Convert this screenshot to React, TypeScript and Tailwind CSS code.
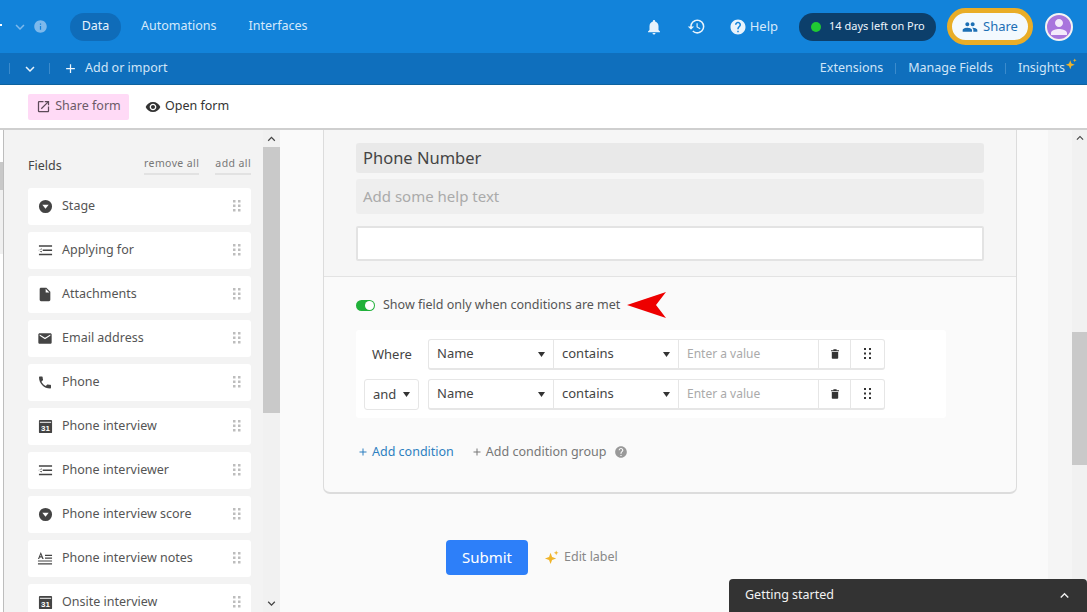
import React from "react";
import { MdNotifications, MdHistory, MdHelp, MdPeople, MdOpenInNew, MdVisibility, MdPhone, MdEmail, MdInsertDriveFile, MdInfo, MdAdd, MdKeyboardArrowDown, MdKeyboardArrowUp, MdArrowDropDown, MdPerson } from "react-icons/md";

const Sparkle = ({ className }: { className?: string }) => (
  <svg viewBox="0 0 16 16" className={className} fill="#f0b429">
    <path d="M7 3 L8.6 7.4 L13 9 L8.6 10.6 L7 15 L5.4 10.6 L1 9 L5.4 7.4 Z" />
    <path d="M13 0.5 L13.7 2.3 L15.5 3 L13.7 3.7 L13 5.5 L12.3 3.7 L10.5 3 L12.3 2.3 Z" />
  </svg>
);

const Grip = ({ color = "#bdbdbd", size = 2 }: { color?: string; size?: number }) => (
  <svg width="8" height="12" viewBox="0 0 8 12" fill={color}>
    {[0, 4.5, 9].map((y) => [0, 5].map((x) => <rect key={`${x}-${y}`} x={x} y={y} width={size + 0.5} height={size + 0.5} />))}
  </svg>
);

const Select = () => (
  <svg viewBox="0 0 16 16" className="w-[15px] h-[15px]" fill="#444">
    <path fillRule="evenodd" d="M8 1a7 7 0 1 1 0 14A7 7 0 0 1 8 1zM4.6 6.2h6.8L8 10.4z" />
  </svg>
);
const Lines = () => (
  <svg viewBox="0 0 16 16" className="w-[15px] h-[15px]" fill="#444">
    <path d="M1 2.5h14v1.6H1zM1 11.5h14v1.6H1zM5 7h10v1.6H5zM1 7h3V5.6L0.5 7.8 4 10V8.6H1z" />
  </svg>
);
const Calendar = () => (
  <svg viewBox="0 0 16 16" className="w-[15px] h-[15px]">
    <rect x="1" y="1" width="14" height="14" rx="1" fill="#444" />
    <rect x="2" y="3" width="12" height="1" fill="#fff" />
    <text x="8" y="13" textAnchor="middle" fontSize="8.5" fontWeight="700" fill="#fff" fontFamily="Liberation Sans, sans-serif">31</text>
  </svg>
);
const LongText = () => (
  <svg viewBox="0 0 16 16" className="w-[16px] h-[15px]" fill="#444">
    <path d="M3.5 1 L6.6 8.4 H5.2 L4.6 6.8 H2.4 L1.8 8.4 H0.5 Z M2.8 5.7 H4.2 L3.5 3.7 Z" />
    <path d="M8 4h7.5v1.3H8zM8 7h7.5v1.3H8zM0.5 10h15v1.3H.5zM.5 13h15v1.3H.5z" />
  </svg>
);
const Trash = () => (
  <svg viewBox="0 0 10 12" className="w-[8px] h-[10px]" fill="#333">
    <path d="M3 0h4v1.2h3v1.3H0V1.2h3zM1 3.6h8v7.4a1 1 0 0 1-1 1H2a1 1 0 0 1-1-1z" />
  </svg>
);

const fields: [string, React.ReactNode][] = [
  ["Stage", <Select />],
  ["Applying for", <Lines />],
  ["Attachments", <MdInsertDriveFile className="text-[#444] text-[17px]" />],
  ["Email address", <MdEmail className="text-[#444] text-[17px]" />],
  ["Phone", <MdPhone className="text-[#444] text-[17px]" />],
  ["Phone interview", <Calendar />],
  ["Phone interviewer", <Lines />],
  ["Phone interview score", <Select />],
  ["Phone interview notes", <LongText />],
  ["Onsite interview", <Calendar />],
];

const Dropdown = ({ label, w }: { label: string; w: string }) => (
  <div className={`${w} h-full flex items-center justify-between pl-[8px] pr-[8px] border-r border-[#e6e6e6]`}>
    <span>{label}</span>
    <svg width="7" height="5" viewBox="0 0 7 5" fill="#333"><path d="M0 0h7L3.5 5z" /></svg>
  </div>
);

const Row = ({ first }: { first?: boolean }) => (
  <div className="flex items-center h-[31px] text-[13px] text-[#444]">
    {first ? (
      <div className="w-[55px] mr-[9px] pl-[8px]">Where</div>
    ) : (
      <div className="w-[55px] mr-[9px] h-full border border-[#e6e6e6] rounded-[3px] flex items-center justify-between pl-[8px] pr-[8px]">
        <span>and</span>
        <svg width="7" height="5" viewBox="0 0 7 5" fill="#333"><path d="M0 0h7L3.5 5z" /></svg>
      </div>
    )}
    <div className="flex h-full border border-[#e6e6e6] border-b-2 rounded-[3px] bg-white">
      <Dropdown label="Name" w="w-[125px]" />
      <Dropdown label="contains" w="w-[125px]" />
      <div className="w-[140px] h-full flex items-center pl-[8px] text-[12px] text-[#aaa] border-r border-[#e6e6e6]">Enter a value</div>
      <div className="w-[32px] h-full flex items-center justify-center border-r border-[#e6e6e6]"><Trash /></div>
      <div className="w-[33px] h-full flex items-center justify-center"><Grip color="#333" size={1.5} /></div>
    </div>
  </div>
);

export default function App() {
  return (
    <div className="relative w-[1087px] h-[612px] overflow-hidden flex flex-col bg-white text-[13px]" style={{ fontFamily: '"Noto Sans", "Open Sans", sans-serif' }}>
      {/* top bar */}
      <div className="h-[53px] shrink-0 bg-[#1283da] flex items-center text-[#d5e9fa] text-[12.5px]">
        <div className="w-[2px] h-[2px] bg-white mt-[-3px]" />
        <MdKeyboardArrowDown className="ml-[9px] text-[18px] text-[#7db9ec]" />
        <MdInfo className="ml-[4px] text-[15px] text-[#7db9ec]" />
        <div className="ml-[22px] w-[51px] h-[28px] rounded-full bg-[#0f6cb9] flex items-center justify-center text-[#e6f2fc]">Data</div>
        <div className="ml-[20px]">Automations</div>
        <div className="ml-[32px]">Interfaces</div>
        <div className="ml-auto flex items-center">
          <MdNotifications className="text-[#e8f3fc] text-[18px]" />
          <MdHistory className="ml-[24px] text-[#e8f3fc] text-[19px]" />
          <MdHelp className="ml-[23px] text-[#e8f3fc] text-[18px]" />
          <span className="ml-[3px] text-[13px]">Help</span>
          <div className="ml-[21px] w-[137px] h-[28px] rounded-full bg-[#0c3f6b] flex items-center pl-[12px] text-[#eef6fd] text-[11px]">
            <span className="w-[10px] h-[10px] rounded-full bg-[#20c933] mr-[8px]" />
            14 days left on Pro
          </div>
          <div className="ml-[11px] w-[86px] h-[37px] rounded-full border-[5px] border-[#e9ad27] bg-[#f3f9fe] flex items-center justify-center text-[#1c6fb5] text-[13px] gap-[5px]">
            <MdPeople className="text-[16px]" />
            Share
          </div>
          <div className="ml-[12px] mr-[14px] w-[28px] h-[28px] rounded-full border-2 border-[#f3f3f3] bg-[#a875dd] flex items-center justify-center overflow-hidden">
            <MdPerson className="text-[#f3eafb] text-[28px]" />
          </div>
        </div>
      </div>
      {/* second bar */}
      <div className="h-[32px] shrink-0 bg-[#0f6fbd] border-b border-[#0d629f] flex items-center text-[#cfe5f8] text-[12.5px]">
        <div className="w-px h-[11px] bg-[#3b8bcc] ml-[9px]" />
        <MdKeyboardArrowDown className="ml-[11px] text-[18px] text-[#e8f3fc]" />
        <div className="w-px h-[11px] bg-[#3b8bcc] ml-[10px]" />
        <MdAdd className="ml-[13px] text-[15px] text-[#f0f7fd]" />
        <span className="ml-[7px]">Add or import</span>
        <div className="ml-auto flex items-center">
          <span>Extensions</span>
          <div className="w-px h-[11px] bg-[#3b8bcc] mx-[12px]" />
          <span>Manage Fields</span>
          <div className="w-px h-[11px] bg-[#3b8bcc] mx-[12px]" />
          <span>Insights</span>
          <Sparkle className="w-[12px] h-[12px] mt-[-9px] mr-[10px]" />
        </div>
      </div>
      {/* toolbar */}
      <div className="h-[45px] shrink-0 bg-white border-b-2 border-[#cfcfcf] flex items-center text-[12.5px] pl-[28px]">
        <div className="w-[101px] h-[26px] rounded-[2px] bg-[#ffdaf6] flex items-center justify-center gap-[4px] text-[#6b5a66]">
          <MdOpenInNew className="text-[15px] text-[#5c4a58]" />
          Share form
        </div>
        <div className="ml-[16px] flex items-center gap-[4px] text-[#333]">
          <MdVisibility className="text-[16px]" />
          Open form
        </div>
      </div>
      {/* body */}
      <div className="flex-1 min-h-0 flex">
        <div className="w-[4px] shrink-0 border-r border-[#bdbdbd] bg-white flex flex-col">
          <div className="h-[28px] mt-[32px] bg-[#c8c8c8]" />
          <div className="h-[64px] bg-[#f0f0f0]" />
        </div>
        {/* fields panel */}
        <div className="w-[259px] shrink-0 bg-[#f3f3f3] pl-[24px] pr-[12px] pt-[26px] overflow-hidden">
          <div className="flex items-start justify-between h-[32px]">
            <span className="text-[#444] text-[12.5px] mt-[1px]">Fields</span>
            <div className="flex gap-[16px] text-[10.5px] tracking-[0.4px] text-[#777]">
              <span className="border-b-2 border-[#e2e2e2] h-[19px]">remove all</span>
              <span className="border-b-2 border-[#e2e2e2] h-[19px]">add all</span>
            </div>
          </div>
          <div className="flex flex-col gap-[7px]">
            {fields.map(([name, icon]) => (
              <div key={name} className="h-[37px] shrink-0 bg-white rounded-[3px] flex items-center pl-[9px] pr-[10px] text-[#555] text-[12.5px]">
                <span className="w-[16px] flex items-center justify-center">{icon}</span>
                <span className="ml-[9px]">{name}</span>
                <span className="ml-auto mt-[-2px]"><Grip /></span>
              </div>
            ))}
          </div>
        </div>
        {/* left scrollbar */}
        <div className="w-[17px] shrink-0 bg-[#f1f1f1] flex flex-col items-center relative">
          <MdKeyboardArrowUp className="text-[#444] text-[15px] mt-[1px] h-[16px]" />
          <div className="w-full h-[266px] bg-[#c9c9c9]" />
          <MdKeyboardArrowDown className="text-[#444] text-[15px] mt-auto mb-[1px]" />
        </div>
        {/* main */}
        <div className="flex-1 min-w-0 bg-[#fafafa] flex flex-col pl-[43px]">
          <div className="w-[694px] h-[364px] shrink-0 border border-t-0 border-b-2 border-[#dcdcdc] rounded-b-[7px] flex flex-col">
            <div className="h-[147px] shrink-0 bg-[#f6f6f6] border-b border-[#e3e3e3] px-[32px] pt-[13px]">
              <div className="h-[30px] rounded-[3px] bg-[#e9e9e9] flex items-center px-[7px] text-[16.5px] text-[#444]">Phone Number</div>
              <div className="mt-[6px] h-[35px] rounded-[3px] bg-[#eeeeee] flex items-center px-[7px] text-[15px] text-[#aaa]">Add some help text</div>
              <div className="mt-[12px] h-[35px] rounded-[2px] bg-white border-2 border-[#e3e3e3]" />
            </div>
            <div className="flex-1 px-[32px]">
              <div className="flex items-center h-[24px] mt-[16px]">
                <div className="w-[19px] h-[11px] rounded-full bg-[#20b13a] flex items-center justify-end pr-[1px]">
                  <span className="w-[9px] h-[9px] rounded-full bg-white" />
                </div>
                <span className="ml-[8px] text-[#555] text-[12.5px]">Show field only when conditions are met</span>
                <svg width="41" height="27" viewBox="0 0 41 27" className="ml-[7px]" fill="#ee0000">
                  <path d="M0 13 L39 0 L29 13 L39 26 Z" />
                </svg>
              </div>
              <div className="mt-[13px] w-[590px] h-[88px] bg-white rounded-[3px] pl-[8px] pt-[9px] flex flex-col gap-[9px]">
                <Row first />
                <Row />
              </div>
              <div className="mt-[25px] flex items-center text-[12.5px]">
                <span className="text-[#2d7fc0] flex items-center"><MdAdd className="text-[12px] mr-[3px] ml-[1px]" />Add condition</span>
                <span className="ml-[17px] text-[#777] flex items-center"><MdAdd className="text-[12px] mr-[3px]" />Add condition group</span>
                <MdHelp className="ml-[7px] text-[#999] text-[14px]" />
              </div>
            </div>
          </div>
          <div className="ml-[123px] mt-[46px] flex items-center">
            <div className="w-[82px] h-[35px] rounded-[4px] bg-[#2d7ff9] text-white text-[15px] flex items-center justify-center">Submit</div>
            <Sparkle className="ml-[16px] w-[15px] h-[15px]" />
            <span className="ml-[5px] text-[12.5px] text-[#888]">Edit label</span>
          </div>
        </div>
        <div className="w-[24px] shrink-0 bg-[#f5f5f5]" />
        {/* right scrollbar */}
        <div className="w-[15px] shrink-0 bg-[#f1f1f1] flex flex-col items-center">
          <MdKeyboardArrowUp className="text-[#444] text-[14px] mt-[1px]" />
          <div className="w-full h-[133px] mt-[187px] bg-[#c9c9c9]" />
        </div>
      </div>
      {/* getting started */}
      <div className="absolute right-0 bottom-0 w-[358px] h-[33px] bg-[#333333] rounded-tl-[4px] rounded-tr-[4px] flex items-center justify-between pl-[16px] pr-[14px] text-[#f2f2f2] text-[12.5px]">
        Getting started
        <MdKeyboardArrowUp className="text-[17px]" />
      </div>
    </div>
  );
}
